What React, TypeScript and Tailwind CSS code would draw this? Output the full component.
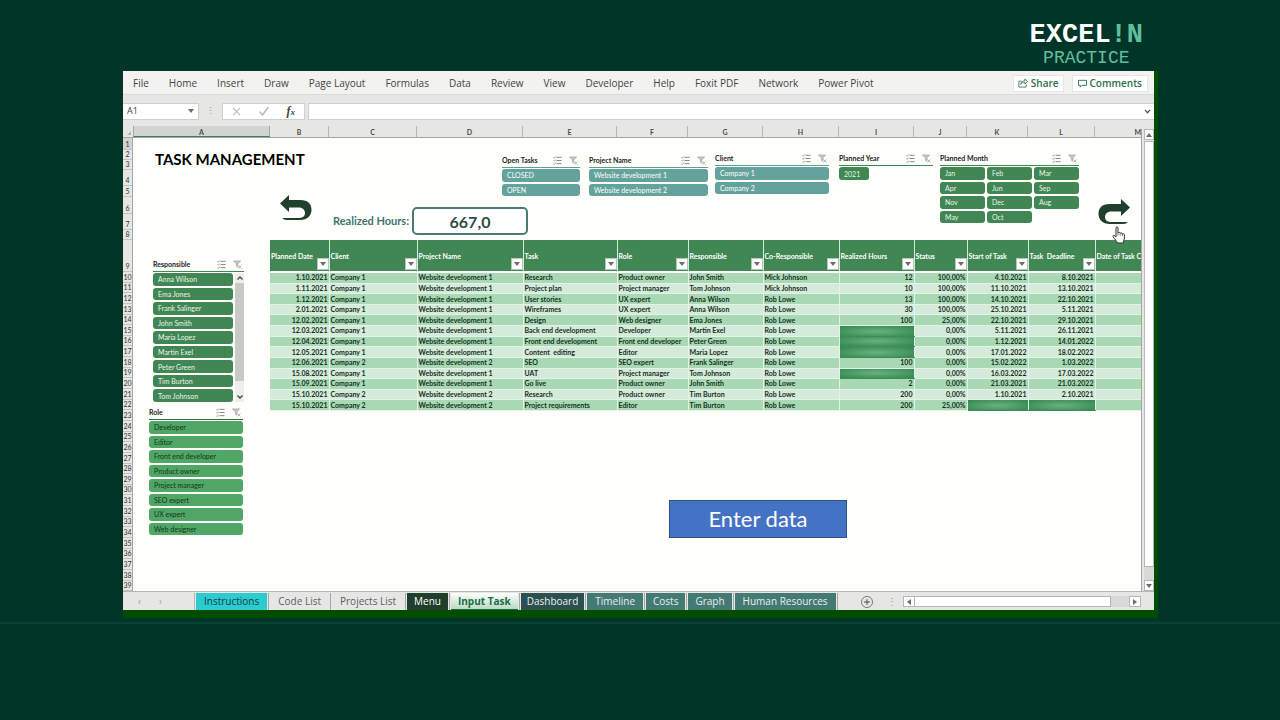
import React from "react";
import clsx from "clsx";

const ribbonTabs = ["File", "Home", "Insert", "Draw", "Page Layout", "Formulas", "Data", "Review", "View", "Developer", "Help", "Foxit PDF", "Network", "Power Pivot"];

const columns = [
  { letter: "B", title: "Planned Date", width: "w-[59px]", right: true },
  { letter: "C", title: "Client", width: "w-[88px]" },
  { letter: "D", title: "Project Name", width: "w-[106px]" },
  { letter: "E", title: "Task", width: "w-[94px]" },
  { letter: "F", title: "Role", width: "w-[71px]" },
  { letter: "G", title: "Responsible", width: "w-[75px]" },
  { letter: "H", title: "Co-Responsible", width: "w-[76px]" },
  { letter: "I", title: "Realized Hours", width: "w-[75px]", right: true },
  { letter: "J", title: "Status", width: "w-[53px]", right: true },
  { letter: "K", title: "Start of Task", width: "w-[61px]", right: true },
  { letter: "L", title: "Task  Deadline", width: "w-[67px]", right: true },
];

const tasks = [
  ["1.10.2021", "Company 1", "Website development 1", "Research", "Product owner", "John Smith", "Mick Johnson", "12", "100,00%", "4.10.2021", "8.10.2021"],
  ["1.11.2021", "Company 1", "Website development 1", "Project plan", "Project manager", "Tom Johnson", "Mick Johnson", "10", "100,00%", "11.10.2021", "13.10.2021"],
  ["1.12.2021", "Company 1", "Website development 1", "User stories", "UX expert", "Anna Wilson", "Rob Lowe", "13", "100,00%", "14.10.2021", "22.10.2021"],
  ["2.01.2021", "Company 1", "Website development 1", "Wireframes", "UX expert", "Anna Wilson", "Rob Lowe", "30", "100,00%", "25.10.2021", "5.11.2021"],
  ["12.02.2021", "Company 1", "Website development 1", "Design", "Web designer", "Ema Jones", "Rob Lowe", "100", "25,00%", "22.10.2021", "29.10.2021"],
  ["12.03.2021", "Company 1", "Website development 1", "Back end development", "Developer", "Martin Exel", "Rob Lowe", "", "0,00%", "5.11.2021", "26.11.2021"],
  ["12.04.2021", "Company 1", "Website development 1", "Front end development", "Front end developer", "Peter Green", "Rob Lowe", "", "0,00%", "1.12.2021", "14.01.2022"],
  ["12.05.2021", "Company 1", "Website development 1", "Content  editing", "Editor", "Maria Lopez", "Rob Lowe", "", "0,00%", "17.01.2022", "18.02.2022"],
  ["12.06.2021", "Company 2", "Website development 2", "SEO", "SEO expert", "Frank Salinger", "Rob Lowe", "100", "0,00%", "15.02.2022", "1.03.2022"],
  ["15.08.2021", "Company 1", "Website development 1", "UAT", "Project manager", "Tom Johnson", "Rob Lowe", "", "0,00%", "16.03.2022", "17.03.2022"],
  ["15.09.2021", "Company 1", "Website development 1", "Go live", "Product owner", "John Smith", "Rob Lowe", "2", "0,00%", "21.03.2021", "21.03.2022"],
  ["15.10.2021", "Company 2", "Website development 2", "Research", "Product owner", "Tim Burton", "Rob Lowe", "200", "0,00%", "1.10.2021", "2.10.2021"],
  ["15.10.2021", "Company 2", "Website development 2", "Project requirements", "Editor", "Tim Burton", "Rob Lowe", "200", "25,00%", "", ""],
];

const topRows = ["h-[12px]", "h-[10px]", "h-[10px]", "h-[16px]", "h-[11px]", "h-[17px]", "h-[16px]", "h-[10px]", "h-[32px]"];
const lowerRows = Array.from({ length: 30 }, (_, i) => i + 10);

const sheetTabs = [
  { name: "Instructions", style: "bg-[#2bcbd1] text-[#0d4043] px-[8px]" },
  { name: "Code List", style: "text-[#5c5f5d] px-[8px]" },
  { name: "Projects List", style: "text-[#5c5f5d] px-[8px]" },
  { name: "Menu", style: "bg-[#1e3f2b] text-white px-[7px]" },
  { name: "Input Task", style: "bg-linear-to-b from-[#fdfefb] to-[#b9dac5] text-[#1d6b43] font-bold border-b border-[#1d6b43] px-[7px]" },
  { name: "Dashboard", style: "bg-[#2c4f4f] text-[#e6efee] px-[6px]" },
  { name: "Timeline", style: "bg-[#447a74] text-[#e6efee] px-[8px]" },
  { name: "Costs", style: "bg-[#447a74] text-[#e6efee] px-[7px]" },
  { name: "Graph", style: "bg-[#447a74] text-[#e6efee] px-[7px]" },
  { name: "Human Resources", style: "bg-[#447a74] text-[#e6efee] px-[8px]" },
];

function MultiSelectIcon() {
  return (
    <svg viewBox="0 0 10 10" className="h-[9px] w-[9px]" fill="none" stroke="#7b7d7b" strokeWidth="1">
      <path d="M4 1.5h5.5M4 5h5.5M4 8.5h5.5" />
      <path d="M.5 1.5l1 1L3 .5M.5 5l1 1L3 4M.5 8.5l1 1L3 7.500" strokeWidth=".8" />
    </svg>
  );
}

function ClearFilterIcon() {
  return (
    <svg viewBox="0 0 10 10" className="h-[9px] w-[9px]" fill="none" stroke="#a9aba9">
      <path d="M.5 1h8L5.500 4.500V8L3.800 7V4.500z" fill="#c4c6c4" strokeWidth=".8" />
      <path d="M6 6l3.500 3.500M9.500 6L6 9.500" strokeWidth=".9" />
    </svg>
  );
}

function Caret({ className }: { className?: string }) {
  return (
    <svg viewBox="0 0 6 4" className={clsx("h-[4px] w-[6px]", className)} fill="#6b6d6b">
      <path d="M0 0h6L3 4z" />
    </svg>
  );
}

function CurvedArrow({ className }: { className?: string }) {
  return (
    <svg viewBox="0 0 32 26" className={clsx("h-[26px] w-8", className)} fill="#213f2d">
      <path d="M0 8.500L9 0v5h11.500c7.500 0 11 4 11 9.800S27.500 25 20 25H7c-2.500 0-4-.8-4.500-2H18c5 0 7-2 7-5s-2-5.500-6.500-5.500H9V17z" />
    </svg>
  );
}

type SlicerProps = {
  title: string;
  items: string[];
  className?: string;
  line?: string;
  list: string;
  item: string;
  scroll?: boolean;
};

function Slicer({ title, items, className, line = "border-[#5f9f97]", list, item, scroll }: SlicerProps) {
  return (
    <section className={clsx("shrink-0", className)}>
      <header className={clsx("flex h-[14px] items-center border-b", line)}>
        <h2 className="flex-1 text-[7px] font-bold whitespace-nowrap text-[#222]">{title}</h2>
        <button aria-label={`Multi-select ${title}`} className="mr-[7px]"><MultiSelectIcon /></button>
        <button aria-label={`Clear filter ${title}`} className="mr-[2px]"><ClearFilterIcon /></button>
      </header>
      <div className="mt-px flex gap-[2px]">
        <div className={clsx("grid flex-1 auto-rows-fr gap-[2px]", list)}>
          {items.map((name) => (
            <button key={name} className={clsx("flex min-h-0 items-center overflow-hidden rounded-[3px] px-[5px] text-left text-[7px] leading-[10px] whitespace-nowrap", item)}>
              {name}
            </button>
          ))}
        </div>
        {scroll && (
          <div className="flex w-[9px] flex-col items-center bg-[#eeefed] py-[3px]">
            <svg viewBox="0 0 6 4" className="h-1 w-[6px]" fill="none" stroke="#444" strokeWidth="1.400"><path d="M.5 3.500L3 1l2.500 2.500" /></svg>
            <div className="my-[3px] mb-[14px] w-full flex-1 bg-[#c9cac8]" />
            <svg viewBox="0 0 6 4" className="h-1 w-[6px]" fill="none" stroke="#444" strokeWidth="1.400"><path d="M.5.5L3 3 5.500.5" /></svg>
          </div>
        )}
      </div>
    </section>
  );
}

function Ribbon() {
  return (
    <nav className="flex h-6 items-center border-b border-[#dadbd9] bg-[#f2f3f1] pt-px pr-[6px] pl-[10px] font-['Open_Sans','Noto_Sans',sans-serif] text-[10px] text-[#444]">
      <div className="flex flex-1 gap-5 whitespace-nowrap">
        {ribbonTabs.map((tab) => (
          <button key={tab}>{tab}</button>
        ))}
      </div>
      <button className="mr-2 flex h-[17px] items-center gap-[3px] border border-[#e6e7e5] bg-white px-1 font-semibold text-[#2b6f4c]">
        <svg viewBox="0 0 11 11" className="h-[10px] w-[10px]" fill="none" stroke="currentColor" strokeWidth=".9">
          <path d="M4 3.500H1v6.500h8V7" />
          <path d="M3 7c.3-2.500 2-3.800 4.500-3.800V1L10.500 4 7.500 6.500V4.800C5.500 4.800 4 5.500 3 7z" />
        </svg>
        Share
      </button>
      <button className="flex h-[17px] items-center gap-[3px] border border-[#e6e7e5] bg-white px-[5px] font-semibold text-[#2b6f4c]">
        <svg viewBox="0 0 10 10" className="h-[9px] w-[9px]" fill="none" stroke="currentColor">
          <path d="M.5 1.500h9v5.500H4.500L2.500 9V7h-2z" />
        </svg>
        Comments
      </button>
    </nav>
  );
}

function FormulaBar() {
  return (
    <div className="flex h-[31px] items-center pt-px font-['Open_Sans','Noto_Sans',sans-serif] text-[9px] text-[#444]">
      <div className="flex h-[17px] w-[76px] items-center border border-l-0 border-[#cfd0ce] bg-white">
        <input aria-label="Name box" defaultValue="A1" className="w-0 flex-1 pl-1 outline-none" />
        <button aria-label="Named ranges" className="mr-1"><Caret /></button>
      </div>
      <span className="flex w-[23px] justify-center text-[#999]">⋮</span>
      <div className="mr-[3px] flex h-[17px] w-[83px] items-center justify-around border border-[#cfd0ce] bg-white">
        <button aria-label="Cancel">
          <svg viewBox="0 0 10 10" className="h-[9px] w-[9px]" stroke="#b9bab8" strokeWidth="1.200"><path d="M1 1l8 8M9 1L1 9" /></svg>
        </button>
        <button aria-label="Enter">
          <svg viewBox="0 0 10 10" className="h-[10px] w-[10px]" fill="none" stroke="#b9bab8" strokeWidth="1.500"><path d="M.5 5.500L3.500 9l6-8" /></svg>
        </button>
        <button className="font-['Liberation_Serif',serif] text-[12px] leading-none font-bold italic">
          f<span className="text-[9px]">x</span>
        </button>
      </div>
      <div className="flex h-[17px] flex-1 items-center border border-r-0 border-[#cfd0ce] bg-white">
        <input aria-label="Formula" className="w-0 flex-1 outline-none" />
        <svg viewBox="0 0 8 6" className="mr-[3px] h-[5px] w-[7px]" fill="none" stroke="#555" strokeWidth="1.600"><path d="M1 1l3 3.500L7 1" /></svg>
      </div>
    </div>
  );
}

function ColumnHeaders() {
  return (
    <div className="flex h-3 overflow-hidden border-b border-[#a5a7a5] text-[7px] leading-[12px] font-bold text-[#4a4c4a]">
      <div className="flex w-[10px] shrink-0 items-end justify-end p-[2px]">
        <svg viewBox="0 0 5 5" className="h-1 w-1" fill="#b5b7b5"><path d="M5 0v5H0z" /></svg>
      </div>
      <div className="w-[137px] shrink-0 border-x border-b border-x-[#a5a7a5] border-b-[#3f8259] bg-[#d1d4d1] text-center">A</div>
      {columns.map((col) => (
        <div key={col.letter} className={clsx("shrink-0 border-r border-[#b5b7b5] text-center", col.width)}>{col.letter}</div>
      ))}
      <div className="flex-1 text-right">M</div>
    </div>
  );
}

function RowHeaders() {
  return (
    <div className="flex w-[10px] shrink-0 flex-col border-r border-[#a5a7a5] text-[7px] text-[#333]">
      {topRows.map((height, i) => (
        <div key={i} className={clsx("flex items-end justify-center border-b border-[#c2c4c2] leading-[9px]", height, i === 0 && "bg-[#d1d4d1]")}>{i + 1}</div>
      ))}
      <div className="flex flex-1 flex-col">
        {lowerRows.map((n) => (
          <div key={n} className="flex flex-1 items-end justify-center border-b border-[#c2c4c2] leading-[9px]">{n}</div>
        ))}
      </div>
    </div>
  );
}

function TaskTable() {
  return (
    <table className="h-[171px] w-full table-fixed border-collapse text-[7px] leading-[9px] font-bold text-[#17301f]">
      <thead>
        <tr className="h-8 border-b-2 border-[#fdfefb] bg-[#408753] text-white">
          {columns.map((col) => (
            <th key={col.letter} className={clsx("border-r border-[#d3ebd8] p-0 text-left align-top", col.width)}>
              <div className="relative h-[30px] pt-3 pl-px whitespace-pre">
                {col.title}
                <button aria-label={`Filter ${col.title}`} className="absolute right-0 bottom-0 flex h-3 w-3 items-center justify-center border border-[#b5c5b9] bg-[#fdfefb]">
                  <Caret />
                </button>
              </div>
            </th>
          ))}
          <th className="overflow-hidden p-0 text-left align-top">
            <div className="h-[30px] pt-3 pl-px whitespace-nowrap">Date of Task Completion</div>
          </th>
        </tr>
      </thead>
      <tbody>
        {tasks.map((row, r) => (
          <tr key={r} className="border-b border-[#e4f3e7] odd:bg-[#a8d8b4] even:bg-[#d3ebd8]">
            {row.map((value, c) => (
              <td
                key={c}
                className={clsx(
                  "border-r border-[#e4f3e7] px-px py-0 whitespace-pre",
                  columns[c].right && "text-right",
                  !value && "border-b border-b-[#3d8c57] bg-radial from-[#68b37f] to-[#33864f]"
                )}
              >
                {value}
              </td>
            ))}
            <td className="p-0" />
          </tr>
        ))}
      </tbody>
    </table>
  );
}

function Sheet() {
  const teal = "bg-[#63a39b] text-white";
  const green = "bg-[#408753] text-[#e9f5ec]";

  return (
    <div className="flex min-w-0 flex-1 flex-col overflow-hidden bg-[#fefffb]">
      <div className="flex h-[102px]">
        <div className="w-[700px] shrink-0">
          <div className="flex h-[57px] pl-[22px]">
            <h1 className="w-[347px] pt-3 text-[15px] leading-[18px] font-bold whitespace-nowrap text-black">TASK MANAGEMENT</h1>
            <Slicer title="Open Tasks" items={["CLOSED", "OPEN"]} className="mr-[9px] w-[78px] pt-4" list="h-[27px]" item={teal} />
            <Slicer title="Project Name" items={["Website development 1", "Website development 2"]} className="mr-[7px] w-[119px] pt-4" list="h-[27px]" item={teal} />
            <Slicer title="Client" items={["Company 1", "Company 2"]} className="w-[114px] pt-[14px]" list="h-[27px]" item={teal} />
          </div>
          <div className="flex items-start pl-[147px]">
            <button aria-label="Back"><CurvedArrow /></button>
            <label htmlFor="hours" className="mt-[18px] ml-[21px] w-[79px] text-[11px] leading-[16px] font-bold whitespace-nowrap text-[#3f7370]">Realized Hours:</label>
            <input id="hours" readOnly value="667,0" className="mt-3 h-7 w-[116px] rounded-[5px] border-2 border-[#4b7a76] bg-white text-center text-[16px] font-bold text-[#2e4b45]" />
          </div>
        </div>
        <div className="flex flex-1 pl-[6px]">
          <Slicer title="Planned Year" items={["2021"]} className="mr-[7px] w-[94px] pt-[14px]" line="border-[#408753]" list="h-[13px] pr-[64px]" item={green} />
          <Slicer title="Planned Month" items={["Jan", "Feb", "Mar", "Apr", "Jun", "Sep", "Nov", "Dec", "Aug", "May", "Oct"]} className="w-[139px] pt-[14px]" line="border-[#408753]" list="h-[56px] grid-cols-3" item={green} />
          <div className="relative mt-[61px] ml-[19px] h-[26px] w-8">
            <button aria-label="Forward"><CurvedArrow className="-scale-x-100" /></button>
            <svg viewBox="0 0 14 18" className="absolute top-[27px] left-[14px] h-[18px] w-[14px]" fill="#fff" stroke="#333" strokeWidth="1" strokeLinejoin="round">
              <path d="M4 10V2c0-1.500 2-1.500 2 0v5c.3-.8 2-.8 2.200.3.500-.7 2-.5 2.200.5.700-.5 2 0 2 1V12c0 2-1 3-1.500 5H5.500C5 15.500 2.500 13 1 10.500.5 9.500 2 8.500 4 11z" />
              <path d="M6 7v2.500M8.200 7.500v2M10.400 8v2" strokeWidth=".7" />
            </svg>
          </div>
        </div>
      </div>
      <div className="flex min-h-[351px]">
        <aside className="w-[137px] shrink-0">
          <Slicer
            title="Responsible"
            items={["Anna Wilson", "Ema Jones", "Frank Salinger", "John Smith", "Maria Lopez", "Martin Exel", "Peter Green", "Tim Burton", "Tom Johnson"]}
            className="ml-5 w-[91px] pt-[18px]"
            line="border-[#408753]"
            list="h-[129px]"
            item={green}
            scroll
          />
          <Slicer
            title="Role"
            items={["Developer", "Editor", "Front end developer", "Product owner", "Project manager", "SEO expert", "UX expert", "Web designer"]}
            className="ml-4 w-[94px] pt-1"
            line="border-[#316b42]"
            list="h-[114px]"
            item="bg-[#4fa665] text-[#12351d]"
          />
        </aside>
        <div className="min-w-0 flex-1">
          <TaskTable />
          <button className="mt-[89px] ml-[399px] h-[38px] w-[178px] border border-[#2f4f86] bg-[#4472c4] text-[22px] leading-none text-white">Enter data</button>
        </div>
      </div>
    </div>
  );
}

function VerticalScrollbar() {
  return (
    <div className="-mt-[9px] flex w-[13px] shrink-0 flex-col border-l border-[#a5a7a5] pl-[2px]">
      <button aria-label="Scroll up" className="flex h-[11px] items-center justify-center border border-[#b5b7b5] bg-white"><Caret className="rotate-180" /></button>
      <div className="mt-px flex flex-1 flex-col bg-[#d9dad8] pb-[13px]">
        <div className="flex-1 border border-[#b5b7b5] bg-white" />
      </div>
      <button aria-label="Scroll down" className="flex h-[11px] items-center justify-center border border-[#b5b7b5] bg-white"><Caret /></button>
    </div>
  );
}

function SheetTabs() {
  return (
    <footer className="flex h-[19px] items-stretch border-t border-[#b5b7b5] pt-px pr-[13px] font-['Open_Sans','Noto_Sans',sans-serif] text-[10px] whitespace-nowrap">
      <div className="flex w-[72px] shrink-0 items-center gap-[18px] border-r border-[#b5b7b5] pl-[15px] text-[#a0a2a0]">
        <button aria-label="Previous sheet">‹</button>
        <button aria-label="Next sheet">›</button>
      </div>
      <div className="flex">
        {sheetTabs.map((tab) => (
          <div key={tab.name} className="flex border-r border-[#a5a7a5] px-px">
            <button className={clsx("flex items-center", tab.style)}>{tab.name}</button>
          </div>
        ))}
      </div>
      <div className="flex flex-1 items-center justify-end gap-[14px]">
        <button aria-label="New sheet">
          <svg viewBox="0 0 13 13" className="h-3 w-3" fill="none" stroke="#6f716f"><circle cx="6.500" cy="6.500" r="6" /><path d="M3.500 6.500h6M6.500 3.500v6" strokeWidth="1.500" /></svg>
        </button>
        <span className="text-[#999]">⋮</span>
      </div>
      <div className="my-[3px] ml-[6px] flex w-[238px] shrink-0 bg-[#d9dad8]">
        <button aria-label="Scroll left" className="flex w-3 items-center justify-center border border-[#b5b7b5] bg-white"><Caret className="rotate-90" /></button>
        <div className="mr-[18px] flex-1 border border-l-0 border-[#b5b7b5] bg-white" />
        <button aria-label="Scroll right" className="flex w-3 items-center justify-center border border-[#b5b7b5] bg-white"><Caret className="-rotate-90" /></button>
      </div>
    </footer>
  );
}

export default function App() {
  return (
    <div className="flex min-h-screen flex-col bg-[#003527] font-['Lato',sans-serif]">
      <header className="flex h-[71px] justify-end pr-[137px]">
        <div className="pt-[23px] text-center font-['Liberation_Mono',monospace] whitespace-nowrap">
          <div className="text-[27px] leading-6 font-bold text-white">EXCEL<span className="text-[#5fbf9f]">!N</span></div>
          <div className="text-[18px] leading-[22px] text-[#5fbf9f]">PRACTICE</div>
        </div>
      </header>
      <main className="mr-[122px] ml-[123px] border-r-4 border-b-8 border-[#004d00] bg-[#e6e7e5]">
        <Ribbon />
        <FormulaBar />
        <div className="mr-[13px]"><ColumnHeaders /></div>
        <div className="flex">
          <RowHeaders />
          <Sheet />
          <VerticalScrollbar />
        </div>
        <SheetTabs />
      </main>
      <div className="mt-1 flex-1 border-t-2 border-[#0a4335]" />
    </div>
  );
}
